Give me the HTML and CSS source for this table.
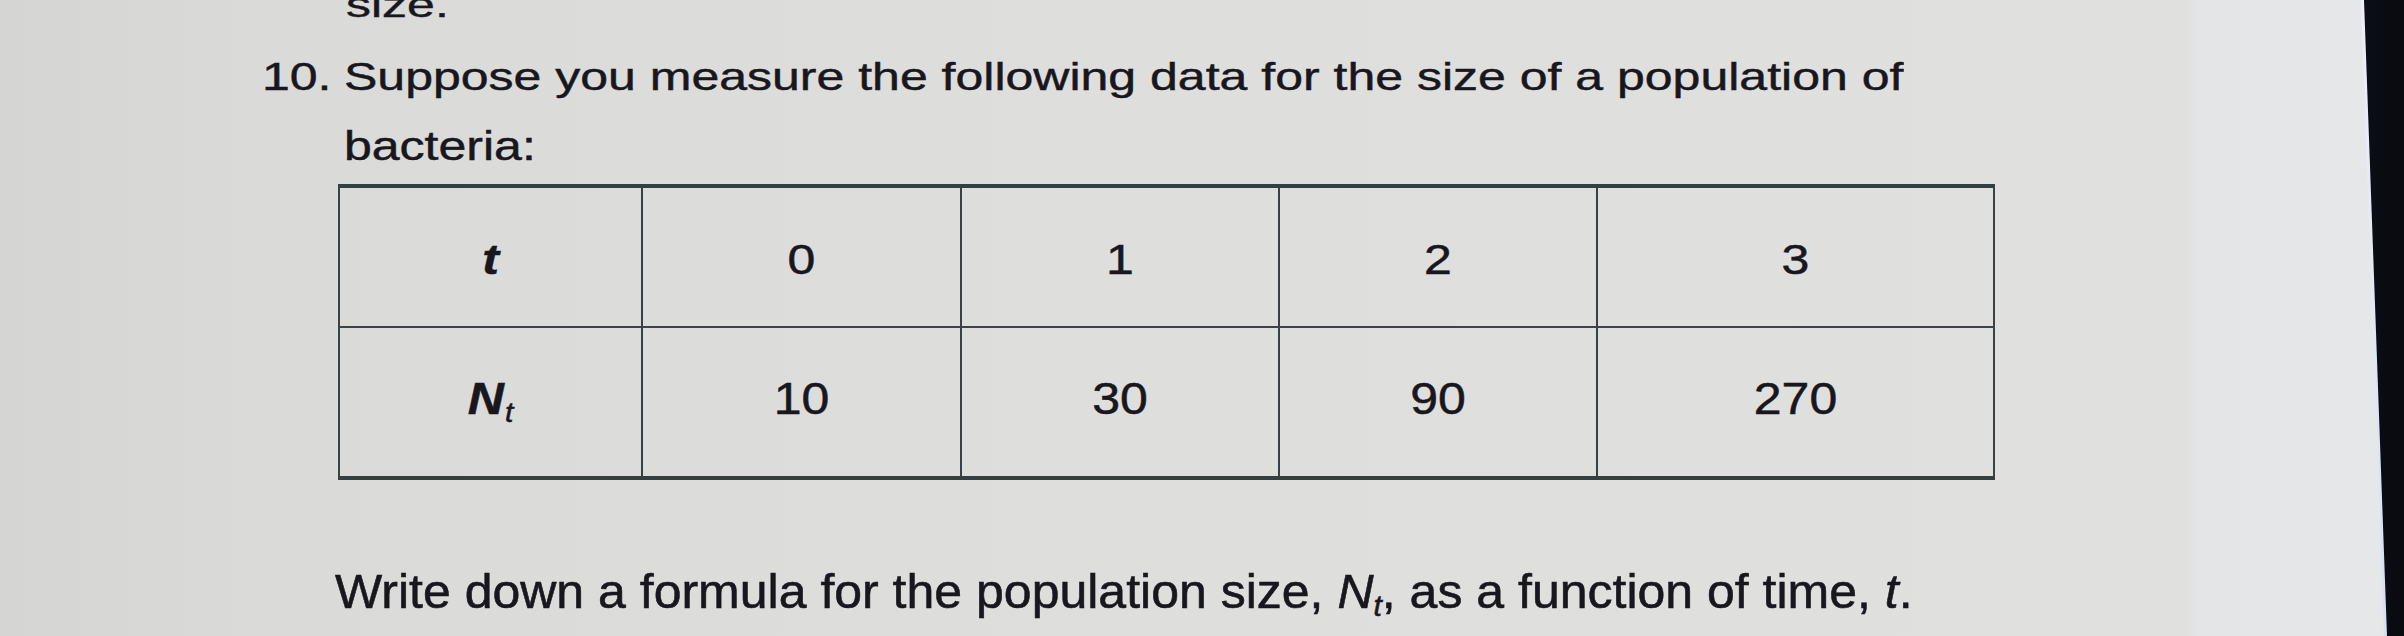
FILE: index.html
```html
<!DOCTYPE html>
<html lang="en">
<head>
<meta charset="utf-8">
<title>Population of bacteria</title>
<link rel="stylesheet" href="styles.css">
</head>
<body>
<div class="page">
  <div class="content">
    <div class="prev line s70">size.</div>
    <div class="question">
      <div class="num line s76">10.</div>
      <div class="qbody">
        <div class="line s76">Suppose you measure the following data for the size of a population of</div>
        <div class="line s82">bacteria:</div>
        <table class="data">
          <tr class="r1">
            <th class="c1"><span class="g s86"><i>t</i></span></th>
            <td class="c2"><span class="g s86">0</span></td>
            <td class="c3"><span class="g s86">1</span></td>
            <td class="c4"><span class="g s86">2</span></td>
            <td class="c5"><span class="g s86">3</span></td>
          </tr>
          <tr class="r2">
            <th class="c1"><span class="g s90"><i>N<sub>t</sub></i></span></th>
            <td class="c2"><span class="g s90">10</span></td>
            <td class="c3"><span class="g s90">30</span></td>
            <td class="c4"><span class="g s90">90</span></td>
            <td class="c5"><span class="g s90">270</span></td>
          </tr>
        </table>
        <div class="ask line s97">Write down a formula for the population size, <i>N<sub>t</sub></i>, as a function of time, <i>t</i>.</div>
      </div>
    </div>
  </div>
  <div class="bezel-edge"></div>
  <div class="bezel"></div>
</div>
</body>
</html>
```

FILE: styles.css
```css
html, body {
  margin: 0;
  padding: 0;
}

body {
  width: 2404px;
  height: 636px;
  overflow: hidden;
}

.page {
  position: relative;
  width: 2404px;
  height: 636px;
  overflow: hidden;
  background: linear-gradient(90deg, #d5d5d3 0px, #dadad8 260px, #dededc 1100px, #e0e0df 2185px, #e4e5e6 2200px, #e6e7e9 2360px);
  font-family: "Liberation Sans", Arial, "Helvetica", sans-serif;
  font-size: 50px;
  color: #18171d;
  -webkit-text-stroke: 0.6px #18171d;
}

.content {
  padding-left: 262px;
}

.line {
  height: 70px;
  line-height: 70px;
  white-space: nowrap;
  transform-origin: 0 52px;
}

.s70 { transform: scaleY(0.70); }
.s76 { transform: scaleY(0.76); }
.s82 { transform: scaleY(0.82); }
.s86 { transform: scaleY(0.86); }
.s90 { transform: scaleY(0.90); }
.s97 { transform: scaleY(0.97); }

.prev {
  margin-top: -35px;
  padding-left: 84px;
}

.question {
  display: flex;
  margin-top: 3px;
}

.num {
  width: 82px;
  flex: none;
}

.qbody {
  display: flex;
  flex-direction: column;
  align-items: flex-start;
}

.data {
  margin-top: 6px;
  margin-left: -6px;
  border-collapse: separate;
  border-spacing: 0;
  table-layout: fixed;
  width: 1657px;
  border-top: 4px solid #34403f;
  border-bottom: 4px solid #34403f;
  border-left: 2px solid #3a4248;
  border-right: 2px solid #3a4248;
}

.data th,
.data td {
  box-sizing: border-box;
  padding: 0;
  text-align: center;
  vertical-align: middle;
  line-height: 50px;
  font-weight: normal;
  border-right: 2px solid #3a4048;
}

.data .c5 {
  border-right: none;
}

.data .c1 { width: 303px; }
.data .c2 { width: 319px; }
.data .c3 { width: 318px; }
.data .c4 { width: 318px; }
.data .c5 { width: 395px; }

.data .r1 th,
.data .r1 td {
  height: 140px;
  border-bottom: 2px solid #3c4446;
}

.data .r2 th,
.data .r2 td {
  height: 148px;
  padding-bottom: 10px;
}

.data th {
  font-weight: bold;
}

.g {
  display: inline-block;
  transform-origin: 50% 42px;
}

.data th i {
  font-style: italic;
  font-weight: bold;
}

.data th sub {
  font-size: 30px;
  font-weight: normal;
  vertical-align: -9px;
  line-height: 0;
  margin-left: 1px;
}

.ask {
  margin-top: 76px;
  margin-left: -9px;
}

.ask sub {
  font-size: 30px;
  vertical-align: -8px;
  line-height: 0;
}

.bezel-edge {
  position: absolute;
  top: 0;
  right: 0;
  width: 50px;
  height: 636px;
  background: linear-gradient(90deg, #f3f5fb, #c9d3ef);
  clip-path: polygon(7px 0, 50px 0, 50px 636px, 30px 636px);
}

.bezel {
  position: absolute;
  top: 0;
  right: 0;
  width: 50px;
  height: 636px;
  background: linear-gradient(90deg, #1a2340 0, #0c0e16 6px, #090a10 50px);
  clip-path: polygon(10px 0, 50px 0, 50px 636px, 33px 636px);
}
```
